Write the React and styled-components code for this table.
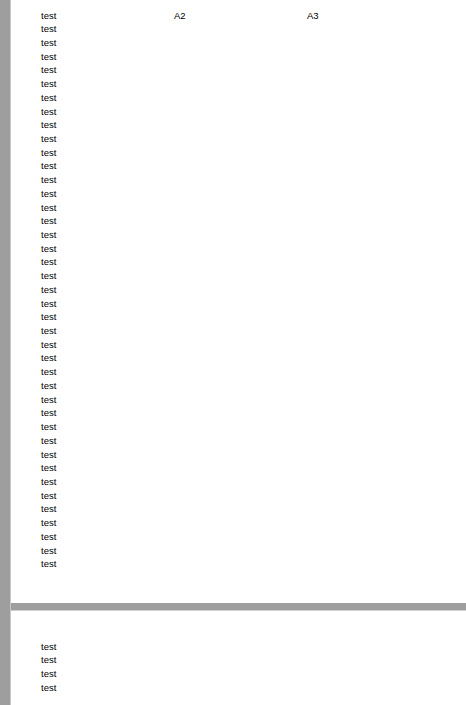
import React from "react";
import styled, { createGlobalStyle } from "styled-components";

const Global = createGlobalStyle`
  html, body { margin: 0; padding: 0; }
  body {
    font-family: "Liberation Sans", Arial, sans-serif;
    background: #9e9e9e;
    overflow: hidden;
  }
`;

const Viewer = styled.div`
  display: flex;
  height: 100vh;
  background: #9e9e9e;
  overflow: hidden;
`;

const Gutter = styled.div`
  width: 10px;
  flex: none;
  border-right: 1px solid #c8c8c8;
`;

const Stack = styled.div`
  flex: 1;
  display: flex;
  flex-direction: column;
  gap: 7px;
`;

const Page = styled.div`
  background: #fff;
  flex: none;
  height: ${(p) => p.$height}px;
  padding: ${(p) => p.$top}px 0 0 30px;
  box-sizing: border-box;
  border-top: ${(p) => (p.$first ? "none" : "1px solid #d0d0d0")};
`;

const Sheet = styled.div`
  display: grid;
  grid-template-columns: repeat(3, 133px);
  grid-auto-rows: 13.725px;
  font-size: 9.5px;
  line-height: 13.725px;
  color: #000;
`;

const Cell = styled.div`
  white-space: nowrap;
`;

const pageOne = Array.from({ length: 41 }, (_, i) =>
  i === 0 ? ["test", "A2", "A3"] : ["test", "", ""]
);
const pageTwo = Array.from({ length: 4 }, () => ["test", "", ""]);

function Rows({ rows }) {
  return (
    <Sheet>
      {rows.flatMap((r, i) => r.map((c, j) => <Cell key={`${i}-${j}`}>{c}</Cell>))}
    </Sheet>
  );
}

export default function App() {
  return (
    <>
      <Global />
      <Viewer>
        <Gutter />
        <Stack>
          <Page $first $height={603} $top={8.5}>
            <Rows rows={pageOne} />
          </Page>
          <Page $height={600} $top={28.5}>
            <Rows rows={pageTwo} />
          </Page>
        </Stack>
      </Viewer>
    </>
  );
}
